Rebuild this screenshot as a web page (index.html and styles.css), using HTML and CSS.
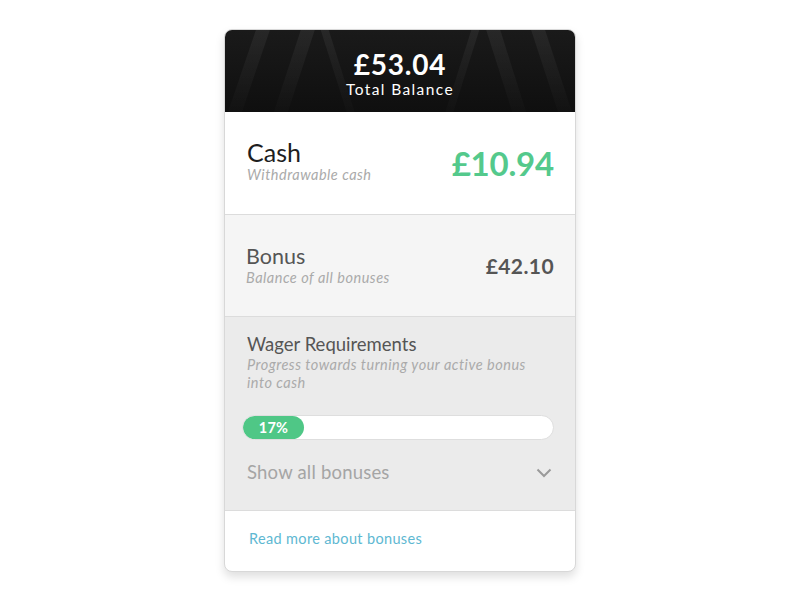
FILE: index.html
```html
<!DOCTYPE html>
<html>
<head>
<meta charset="utf-8">
<link rel="stylesheet" href="styles.css">
</head>
<body>
<div class="card">
  <div class="header">
    <svg class="stripes" width="351" height="82" viewBox="0 0 351 82" preserveAspectRatio="none">
      <defs>
        <linearGradient id="fade" x1="0" y1="0" x2="0" y2="1">
          <stop offset="0" stop-color="#ffffff" stop-opacity="0.06"/>
          <stop offset="1" stop-color="#ffffff" stop-opacity="0.012"/>
        </linearGradient>
      </defs>
      <polygon points="31,0 45,0 17,82 3,82" fill="url(#fade)"/>
      <polygon points="76,0 90,0 63,82 49,82" fill="url(#fade)"/>
      <polygon points="96,0 104,0 130,82 122,82" fill="url(#fade)"/>
      <polygon points="255,0 247,0 221,82 229,82" fill="url(#fade)"/>
      <polygon points="262,0 276,0 302,82 288,82" fill="url(#fade)"/>
      <polygon points="307,0 321,0 348,82 334,82" fill="url(#fade)"/>
    </svg>
    <div class="total">£53.04</div>
    <div class="total-label">Total Balance</div>
  </div>
  <div class="row cash">
    <div class="info">
      <div class="title">Cash</div>
      <div class="sub">Withdrawable cash</div>
    </div>
    <div class="amount">£10.94</div>
  </div>
  <div class="row bonus">
    <div class="info">
      <div class="title">Bonus</div>
      <div class="sub">Balance of all bonuses</div>
    </div>
    <div class="amount">£42.10</div>
  </div>
  <div class="wager">
    <div class="title">Wager Requirements</div>
    <div class="sub">Progress towards turning your active bonus into cash</div>
    <div class="bar">
      <div class="fill" style="width: 61px">17%</div>
    </div>
    <div class="show">
      <span>Show all bonuses</span>
      <svg width="16" height="10" viewBox="0 0 16 10"><polyline points="1.5,1.5 8,8 14.5,1.5" fill="none" stroke="#9a9a9a" stroke-width="2"/></svg>
    </div>
  </div>
  <div class="footer">
    <a class="link" href="#">Read more about bonuses</a>
  </div>
</div>
</body>
</html>
```
FILE: styles.css
```css
* { box-sizing: border-box; }
body {
  margin: 0;
  background: #ffffff;
  font-family: Lato, "Open Sans", sans-serif;
  width: 800px;
  height: 600px;
}
.card {
  width: 352px;
  margin: 29px 0 0 224px;
  border-radius: 8px;
  overflow: hidden;
  background: #fff;
  border: 1px solid #d8d8d8;
  box-shadow: 0 5px 10px rgba(0,0,0,0.13);
}
.header {
  position: relative;
  height: 82px;
  background: linear-gradient(#1a1a1a, #0f0f0f);
  display: flex;
  flex-direction: column;
  align-items: center;
  justify-content: center;
  color: #fff;
}
.stripes {
  position: absolute;
  left: 0;
  top: 0;
  width: 100%;
  height: 100%;
}
.total {
  position: relative;
  font-size: 28px;
  font-weight: 700;
  line-height: 28px;
  letter-spacing: 0.8px;
  margin-top: 6px;
}
.total-label {
  position: relative;
  font-size: 15.5px;
  line-height: 18px;
  letter-spacing: 1.4px;
  margin-top: 2px;
}
.row {
  display: flex;
  align-items: center;
  justify-content: space-between;
  padding: 0 21px 0 22px;
  border-bottom: 1px solid #dcdcdc;
}
.cash { height: 103px; background: #fff; }
.bonus { height: 102px; background: #f5f5f5; padding-left: 21px; }
.title {
  font-size: 25px;
  line-height: 28px;
  color: #1e1e1e;
}
.sub {
  font-size: 14.5px;
  font-style: italic;
  color: #aaaaaa;
  line-height: 18px;
  letter-spacing: 0.5px;
}
.cash .info { margin-top: -5px; }
.cash .amount {
  font-size: 33px;
  font-weight: 700;
  color: #54c98c;
  letter-spacing: -0.2px;
}
.bonus .title { font-size: 21.5px; color: #555; line-height: 26px; }
.bonus .info { margin-top: -1px; }
.bonus .amount {
  font-size: 21px;
  font-weight: 700;
  color: #555;
  letter-spacing: 0.4px;
}
.wager {
  background: #ebebeb;
  padding: 15px 22px 0 17px;
  height: 194px;
  border-bottom: 1px solid #dcdcdc;
}
.wager .title {
  font-size: 18.5px;
  color: #555;
  line-height: 24px;
  padding-left: 5px;
}
.wager .sub {
  padding-left: 5px;
  width: 310px;
}
.bar {
  margin-top: 23px;
  width: 312px;
  height: 25px;
  background: #fff;
  border: 1px solid #dedede;
  border-radius: 13px;
  overflow: hidden;
}
.fill {
  height: 100%;
  background: #4fc786;
  border-radius: 12px;
  color: #fff;
  font-weight: 700;
  font-size: 14.5px;
  letter-spacing: 0.3px;
  display: flex;
  align-items: center;
  justify-content: center;
}
.show {
  display: flex;
  justify-content: space-between;
  align-items: center;
  margin-top: 21px;
  padding-left: 5px;
  padding-right: 1px;
  font-size: 18.5px;
  letter-spacing: 0.2px;
  color: #a5a5a5;
}
.show svg { margin-top: 2px; }
.footer {
  height: 60px;
  display: flex;
  align-items: center;
  padding-left: 24px;
  padding-bottom: 5px;
}
.link {
  font-size: 14.5px;
  letter-spacing: 0.35px;
  color: #5eb8d2;
  text-decoration: none;
}
```
